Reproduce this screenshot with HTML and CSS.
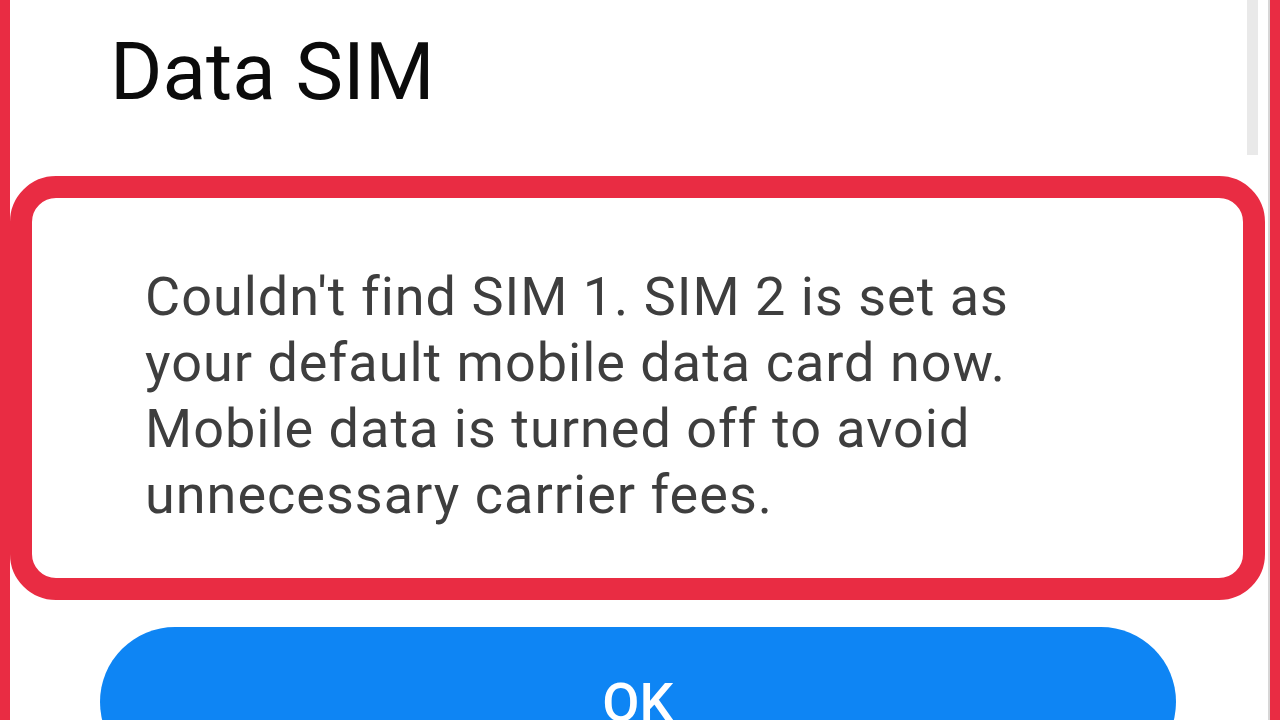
FILE: index.html
```html
<!DOCTYPE html>
<html lang="en">
<head>
    <meta charset="UTF-8">
    <meta name="viewport" content="width=device-width, initial-scale=1.0">
    <title>Data SIM</title>
    <link rel="stylesheet" href="styles.css">
</head>
<body>
    <div class="screen">
        <div class="scrollbar"></div>
        <h1 class="title">Data SIM</h1>
        <div class="notice">
            <p class="message">Couldn't find SIM 1. SIM 2 is set as your default mobile data card now. Mobile data is turned off to avoid unnecessary carrier fees.</p>
        </div>
        <button class="btn-ok">OK</button>
    </div>
</body>
</html>
```

FILE: styles.css
```css
body {
    margin: 0;
    padding: 0;
    background-color: #fff;
    font-family: Roboto, "Noto Sans", Arial, sans-serif;
    overflow: hidden;
}
/* red frame round the dialog */
.screen {
    position: relative;
    height: 720px;
    border-left: 10px solid #e92c43;
    border-right: 10px solid #e92c43;
    box-shadow: inset -2px 0 0 #d6d6d6;
    overflow: hidden;
}
.scrollbar {
    position: absolute;
    top: 0;
    right: 12px;
    width: 11px;
    height: 155px;
    background-color: #e9e9e9;
}
.title {
    margin: 0;
    padding: 32px 0 0 100px;
    font-size: 80px;
    line-height: 80px;
    font-weight: 400;
    color: #0b0b0b;
}
.notice {
    margin: 64px 5px 0 0;
    border: 22px solid #e92c43;
    border-radius: 46px;
    padding: 66px 0 50px 113px;
}
.message {
    margin: 0;
    max-width: 900px;
    font-size: 54px;
    line-height: 66px;
    letter-spacing: 1px;
    color: #3e3e3e;
}
.btn-ok {
    display: block;
    margin: 27px 0 0 90px;
    width: 1076px;
    height: 150px;
    border: none;
    border-radius: 75px;
    background-color: #0e85f4;
    color: #fff;
    font-family: Roboto, "Noto Sans", Arial, sans-serif;
    font-size: 54px;
    font-weight: 500;
    cursor: pointer;
}
```
